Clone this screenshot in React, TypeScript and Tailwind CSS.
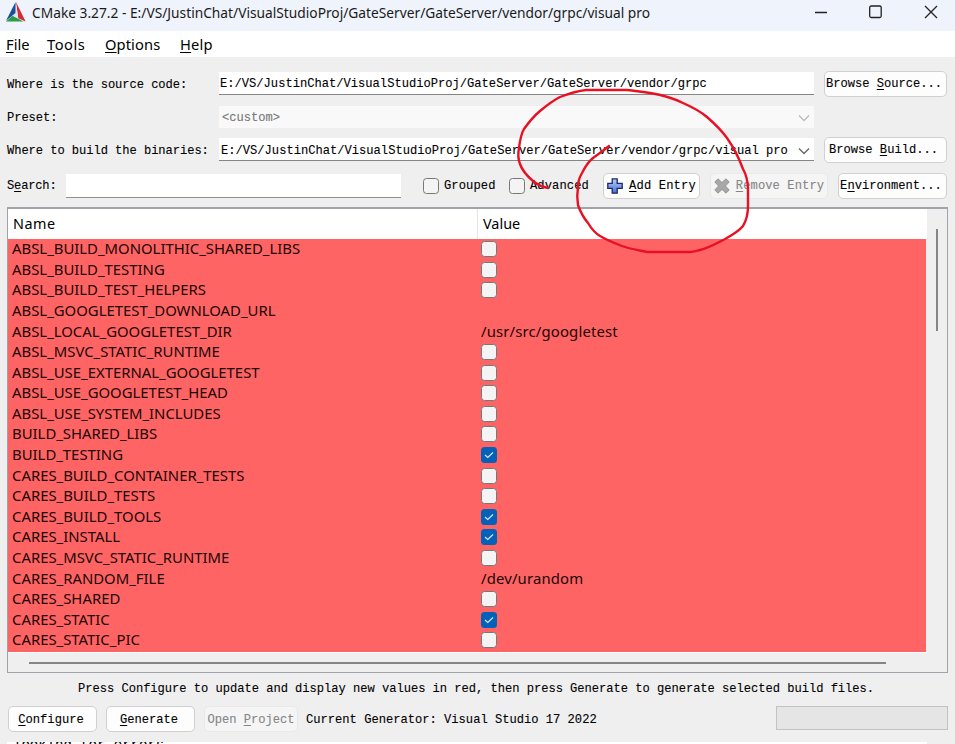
import React from 'react';

const rows: [string, boolean | string][] = [
  ['ABSL_BUILD_MONOLITHIC_SHARED_LIBS', false],
  ['ABSL_BUILD_TESTING', false],
  ['ABSL_BUILD_TEST_HELPERS', false],
  ['ABSL_GOOGLETEST_DOWNLOAD_URL', ''],
  ['ABSL_LOCAL_GOOGLETEST_DIR', '/usr/src/googletest'],
  ['ABSL_MSVC_STATIC_RUNTIME', false],
  ['ABSL_USE_EXTERNAL_GOOGLETEST', false],
  ['ABSL_USE_GOOGLETEST_HEAD', false],
  ['ABSL_USE_SYSTEM_INCLUDES', false],
  ['BUILD_SHARED_LIBS', false],
  ['BUILD_TESTING', true],
  ['CARES_BUILD_CONTAINER_TESTS', false],
  ['CARES_BUILD_TESTS', false],
  ['CARES_BUILD_TOOLS', true],
  ['CARES_INSTALL', true],
  ['CARES_MSVC_STATIC_RUNTIME', false],
  ['CARES_RANDOM_FILE', '/dev/urandom'],
  ['CARES_SHARED', false],
  ['CARES_STATIC', true],
  ['CARES_STATIC_PIC', false],
];

const path = 'E:/VS/JustinChat/VisualStudioProj/GateServer/GateServer/vendor/grpc';

function Mnemonic({ text, at }: { text: string; at: number }) {
  return (
    <span className="whitespace-pre">
      {text.slice(0, at)}
      <span className="underline underline-offset-2">{text[at]}</span>
      {text.slice(at + 1)}
    </span>
  );
}

function Button({ text, at, className, disabled, icon }: { text: string; at: number; className: string; disabled?: boolean; icon?: React.ReactNode }) {
  return (
    <button
      className={`flex h-[26px] shrink-0 items-center justify-center rounded-[5px] border-[1.5px] pt-px ${
        disabled ? 'border-[#e9e9e9] bg-[#f5f5f5] text-[#858585]' : 'border-[#d0d0d0] bg-[#fdfdfd] text-black'
      } ${className}`}
    >
      {icon}
      <Mnemonic text={text} at={at} />
    </button>
  );
}

function Chevron({ color }: { color: string }) {
  return (
    <svg width="12" height="8" viewBox="0 0 12 8" fill="none" stroke={color} strokeWidth="1.3">
      <path d="M1 1.5 6 6.5 11 1.5" />
    </svg>
  );
}

function Check({ checked }: { checked: boolean }) {
  return checked ? (
    <span className="flex size-4 shrink-0 items-center justify-center rounded-[3.5px] bg-[#0560b8]">
      <svg width="10" height="8" viewBox="0 0 10 8" fill="none" stroke="#d5e8fa" strokeWidth="1.2">
        <path d="M1 4 3.8 6.5 9 1.5" />
      </svg>
    </span>
  ) : (
    <span className="block size-4 shrink-0 rounded-[3.5px] border-[1.3px] border-[#777] bg-[#f4f4f4]" />
  );
}

export default function App() {
  return (
    <div className="relative flex h-[744px] w-[955px] flex-col overflow-hidden bg-[#efefef] font-['Liberation_Mono',monospace] text-[12.12px] leading-4 text-black [-webkit-text-stroke:0.1px]">
      <header className="flex h-[31px] shrink-0 items-center bg-[#eff3fb] pl-[6px] font-['Noto_Sans',sans-serif] text-[#1a1a1a] [-webkit-text-stroke:0]">
        <svg className="mt-[-7px]" width="20" height="20" viewBox="0 0 20 20">
          <path d="M9.5 0 0 18.8 9.7 11Z" fill="#1c4f9f" />
          <path d="M10 0 19.6 19.4 12.2 16.2Z" fill="#d22c35" />
          <path d="M6.5 13.8 0 19.4H17.5Z" fill="#2b9b45" />
          <path d="M10 1.5 9.7 11 6.5 13.8 12.3 16.3Z" fill="#dde3ea" />
        </svg>
        <span className="mt-[-6px] ml-[6px] text-[13.75px] whitespace-pre">CMake 3.27.2 - {path}/visual pro</span>
        <svg className="mt-[-7px] ml-auto mr-[17px]" width="124" height="14" viewBox="0 0 124 14" fill="none" stroke="#222" strokeWidth="1.3">
          <path d="M1 7.5H13M111 1 123 13M123 1 111 13" />
          <rect x="55.7" y="1" width="11.5" height="11.5" rx="1.5" />
        </svg>
      </header>
      <nav className="flex h-[26px] shrink-0 items-center bg-white pl-[6px] font-['Noto_Sans',sans-serif] text-[14.7px] [-webkit-text-stroke:0]">
        <div className="w-[41px]"><Mnemonic text="File" at={0} /></div>
        <div className="w-[58px] tracking-[0.5px]"><Mnemonic text="Tools" at={0} /></div>
        <div className="w-[75px] tracking-[0.1px]"><Mnemonic text="Options" at={0} /></div>
        <div className="tracking-[0.2px]"><Mnemonic text="Help" at={0} /></div>
      </nav>

      <div className="mt-[13px] flex h-[27px] shrink-0 items-center pl-[7px]">
        <span className="w-[212px] pt-[3px] tracking-[-0.06px]">Where is the source code:</span>
        <div className="flex h-[23px] w-[595px] items-center border-b border-[#858585] bg-white pt-[2px] pl-px">{path}</div>
        <Button className="ml-[10px] w-[123px] pr-[3px] tracking-[-0.03px]" text="Browse Source..." at={7} />
      </div>
      <div className="mt-[9px] flex h-[22px] shrink-0 items-center pl-[7px]">
        <span className="w-[212px] pt-px tracking-[-0.06px]">Preset:</span>
        <div className="flex h-[22px] w-[595px] items-center justify-between bg-[#f9f9f9] pt-px pr-1 pl-[3px] text-[#777]">
          &lt;custom&gt;
          <Chevron color="#bbb" />
        </div>
      </div>
      <div className="mt-[8px] flex h-[27px] shrink-0 items-center pl-[7px]">
        <span className="w-[212px] pt-[3px] tracking-[-0.06px]">Where to build the binaries:</span>
        <div className="flex h-[23px] w-[595px] items-center justify-between border-b border-[#858585] bg-white pt-[3px] pr-1 pl-[2px]">
          {path}/visual pro
          <Chevron color="#666" />
        </div>
        <Button className="ml-[10px] w-[123px] pr-[4px]" text="Browse Build..." at={7} />
      </div>
      <div className="mt-[9px] flex h-[27px] shrink-0 items-center pl-[7px]">
        <span className="w-[59px] pt-px tracking-[-0.2px]"><Mnemonic text="Search:" at={1} /></span>
        <div className="mt-px h-[24px] w-[335px] border-b border-[#909090] bg-white" />
        <span className="ml-[22px]"><Check checked={false} /></span>
        <span className="ml-[5px] w-[65px] pt-px tracking-[0.1px]">Grouped</span>
        <Check checked={false} />
        <span className="ml-[5px] w-[73px] pt-px tracking-[0.1px]">Advanced</span>
        <Button
          className="w-[97px] gap-[6px] border-[#cbd0d8] tracking-[0.15px]"
          text="Add Entry"
          at={0}
          icon={
            <svg width="16" height="16" viewBox="0 0 16 16">
              <defs>
                <linearGradient id="plus" x2="0" y2="1">
                  <stop stopColor="#b8cdfa" />
                  <stop offset="1" stopColor="#4a6fd8" />
                </linearGradient>
              </defs>
              <path d="M5.2 .8H10.2V5.3H15.2V10.3H10.2V15.2H5.2V10.3H.8V5.3H5.2Z" fill="url(#plus)" stroke="#1c2869" strokeWidth="1.3" />
            </svg>
          }
        />
        <Button
          className="ml-[10px] w-[118px] gap-[6px] tracking-[0.1px]"
          text="Remove Entry"
          at={0}
          disabled
          icon={
            <svg width="16" height="16" viewBox="0 0 16 16">
              <path d="M4 .8 8 4.6 12 .8 15.2 4 11.4 8 15.2 12 12 15.2 8 11.4 4 15.2 .8 12 4.6 8 .8 4Z" fill="#a8a8a8" stroke="#949494" />
            </svg>
          }
        />
        <Button className="ml-[10px] w-[109px] pr-[3px]" text="Environment..." at={1} />
      </div>

      <main className="mt-[8px] ml-[7px] flex h-[466px] w-[941px] shrink-0 border-[1.5px] border-t-2 border-[#a0a4aa] font-['Noto_Sans',sans-serif] text-[14.88px] [-webkit-text-stroke:0]">
        <div className="flex w-[919px] flex-col">
          <div className="flex h-[30px] shrink-0 items-center bg-white text-[14.4px]">
            <span className="w-[469px] pl-[5px] leading-[30px] tracking-[0.5px]">Name</span>
            <span className="flex-1 border-l border-[#e5e5e5] pl-[5px] leading-[30px]">Value</span>
          </div>
          <div className="mr-px h-[413px] shrink-0 bg-[#ff6464] text-[#200606]">
            {rows.map(([name, value]) => (
              <div key={name} className="flex h-[20.58px] items-center">
                <span className="w-[473px] pb-[2px] pl-1">{name}</span>
                {typeof value === 'string' ? <span className="pb-[2px] tracking-[0.15px]">{value}</span> : <Check checked={value} />}
              </div>
            ))}
          </div>
          <div className="flex flex-1 items-center border-t border-white pl-[21px]">
            <div className="h-[2px] w-[857px] bg-[#858585]" />
          </div>
        </div>
        <div className="flex-1 pt-[20px] pl-[9px]">
          <div className="h-[102px] w-[2px] bg-[#858585]" />
        </div>
      </main>

      <p className="mt-[8px] shrink-0 pl-[78px] tracking-[-0.03px] whitespace-pre">Press Configure to update and display new values in red, then press Generate to generate selected build files.</p>
      <footer className="mt-[9px] flex h-[26px] shrink-0 items-center pl-[8px]">
        <Button className="w-[89px] pr-[3px]" text="Configure" at={0} />
        <Button className="ml-[9px] w-[89px] pr-[3px]" text="Generate" at={0} />
        <Button className="ml-[9px] w-[94px]" text="Open Project" at={5} disabled />
        <span className="ml-[8px] pt-px">Current Generator: Visual Studio 17 2022</span>
        <div className="mb-[2px] ml-auto mr-[7px] h-[24px] w-[172px] border border-[#c2c2c2] bg-[#e5e5e5]" />
      </footer>
      <div className="mt-auto ml-[7px] h-[2px] w-[920px] shrink-0 overflow-hidden bg-white pl-[6px] text-[14px] whitespace-pre">
        <div className="-mt-[5px]">looking for errors</div>
      </div>

      <svg className="pointer-events-none absolute inset-0" width="955" height="744" fill="none" stroke="#e81123" strokeWidth="2.4" strokeLinecap="round" strokeLinejoin="round">
        <path d="M548 188C542 187 538 185 533 181C526 175 522 170 520 164C518 159 518 153 519 148C520 140 521 134 524 129C529 122 534 116 540 111C546 106 552 101 560 97C568 94 577 91 586 90L627 90C636 91 643 92 650 93C662 95 673 98 683 103C692 107 700 111 707 117C715 124 722 131 727 138C734 148 739 158 743 169C747 176 748 182 748 190L748 206C748 214 746 221 743 226C738 232 732 235 725 239C717 243 709 248 700 250C696 251 693 252 690 252L647 252C638 250 630 249 622 246C614 243 607 240 600 236C595 233 591 228 588 223C583 217 580 211 578 205C577 199 577 193 578 187C578 182 579 178 582 173C585 167 588 162 593 158L604 150 609 146" />
      </svg>
    </div>
  );
}
